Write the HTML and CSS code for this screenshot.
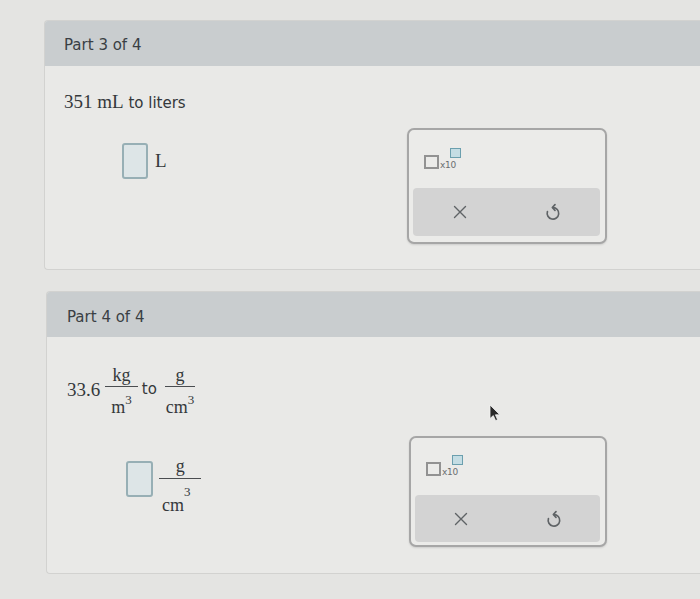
FILE: index.html
```html
<!DOCTYPE html>
<html>
<head>
<meta charset="utf-8">
<link rel="stylesheet" href="styles.css">
</head>
<body>
<div class="page">
  <section class="card card-p3">
    <div class="card-head">Part 3 of 4</div>
    <div class="card-body body-p3">
      <div class="work work-p3">
        <div class="question"><span class="serif">351 mL</span> to liters</div>
        <div class="answer answer-p3">
          <span class="input-box"></span>
          <span class="serif unit">L</span>
        </div>
      </div>
      <div class="tools tools-p3">
        <div class="tools-top">
          <span class="sci"><span class="sci-box"></span><span class="sci-x">x10</span><span class="sci-exp"></span></span>
        </div>
        <div class="tools-bar">
          <span class="tool-btn">
            <svg width="14" height="14" viewBox="0 0 14 14"><path d="M1.5 1.5 L12.5 12.5 M12.5 1.5 L1.5 12.5" stroke="#5f6366" stroke-width="1.4" fill="none" stroke-linecap="round"/></svg>
          </span>
          <span class="tool-btn">
            <svg width="18" height="20" viewBox="0 0 16 18"><path d="M8 5 A5.2 5.2 0 1 1 3 8.6" stroke="#5f6366" stroke-width="1.5" fill="none" stroke-linecap="round"/><path d="M9.8 2.4 L7.4 5 L9.8 7.6" stroke="#5f6366" stroke-width="1.5" fill="none" stroke-linecap="round" stroke-linejoin="round"/></svg>
          </span>
        </div>
      </div>
    </div>
  </section>

  <section class="card card-p4">
    <div class="card-head">Part 4 of 4</div>
    <div class="card-body body-p4">
      <div class="work work-p4">
        <div class="expr">
          <span class="num-main">33.6</span>
          <span class="frac frac-a">
            <span class="frac-num">kg</span>
            <span class="frac-bar"></span>
            <span class="frac-den"><span class="den-base">m</span><span class="den-exp">3</span></span>
          </span>
          <span class="word-to">to</span>
          <span class="frac frac-b">
            <span class="frac-num">g</span>
            <span class="frac-bar"></span>
            <span class="frac-den"><span class="den-base">cm</span><span class="den-exp">3</span></span>
          </span>
        </div>
        <div class="answer answer-p4">
          <span class="input-box input-box-p4"></span>
          <span class="frac frac-c">
            <span class="frac-num">g</span>
            <span class="frac-bar"></span>
            <span class="frac-den"><span class="den-base">cm</span><span class="den-exp">3</span></span>
          </span>
        </div>
      </div>
      <div class="tools tools-p4">
        <div class="tools-top">
          <span class="sci"><span class="sci-box"></span><span class="sci-x">x10</span><span class="sci-exp"></span></span>
        </div>
        <div class="tools-bar">
          <span class="tool-btn">
            <svg width="14" height="14" viewBox="0 0 14 14"><path d="M1.5 1.5 L12.5 12.5 M12.5 1.5 L1.5 12.5" stroke="#5f6366" stroke-width="1.4" fill="none" stroke-linecap="round"/></svg>
          </span>
          <span class="tool-btn">
            <svg width="18" height="20" viewBox="0 0 16 18"><path d="M8 5 A5.2 5.2 0 1 1 3 8.6" stroke="#5f6366" stroke-width="1.5" fill="none" stroke-linecap="round"/><path d="M9.8 2.4 L7.4 5 L9.8 7.6" stroke="#5f6366" stroke-width="1.5" fill="none" stroke-linecap="round" stroke-linejoin="round"/></svg>
          </span>
        </div>
      </div>
    </div>
  </section>

  <svg class="cursor" width="12" height="18" viewBox="0 0 12 18"><path d="M1 1 L1 14.5 L4.3 11.6 L6.6 16.6 L8.6 15.7 L6.4 10.8 L10.8 10.8 Z" fill="#2a2a2a" stroke="#f2f2f2" stroke-width="0.8"/></svg>
</div>
</body>
</html>
```

FILE: styles.css
```css
html, body {
  margin: 0;
  padding: 0;
}

body {
  background: #e4e4e2;
  overflow: hidden;
  font-family: "DejaVu Sans", Verdana, sans-serif;
  color: #34383b;
}

.page {
  position: relative;
  height: 599px;
  box-sizing: border-box;
  padding: 20px 0 0 44px;
}

.card {
  background: #e9e9e7;
  border: 1px solid #d2d2d0;
  border-right: none;
  border-radius: 4px 0 0 4px;
  overflow: hidden;
}

.card-p4 {
  margin-top: 21px;
  margin-left: 2px;
}

.card-head {
  height: 45px;
  box-sizing: border-box;
  background: #c9cdcf;
  display: flex;
  align-items: center;
  padding: 3px 0 0 19px;
  font-size: 15px;
  color: #3a3f44;
}

.card-p4 .card-head {
  padding-left: 20px;
  padding-top: 4px;
}

.card-body {
  display: flex;
  box-sizing: border-box;
}

.body-p3 {
  height: 203px;
  padding: 24px 0 0 19px;
}

.body-p4 {
  height: 236px;
  padding: 28px 0 0 20px;
}

.work-p3 {
  width: 343px;
}

.work-p4 {
  width: 342px;
}

.serif {
  font-family: "Liberation Serif", "Times New Roman", serif;
  font-size: 19px;
}

.question {
  font-size: 15px;
  line-height: 24px;
}

.answer {
  display: flex;
}

.answer-p3 {
  align-items: center;
  margin-top: 28px;
  padding-left: 58px;
}

.input-box {
  width: 26px;
  height: 36px;
  box-sizing: border-box;
  background: #dde5e7;
  border: 2px solid #97afb5;
  border-radius: 3px;
}

.unit {
  margin-left: 7px;
  line-height: 24px;
}

/* expression */
.expr {
  display: flex;
  align-items: flex-start;
}

.num-main {
  font-family: "Liberation Serif", "Times New Roman", serif;
  font-size: 19px;
  line-height: 20px;
  margin-top: 15px;
}

.frac {
  display: flex;
  flex-direction: column;
  font-family: "Liberation Serif", "Times New Roman", serif;
  font-size: 18px;
  color: #34383b;
}

.frac-num {
  line-height: 20px;
  text-align: center;
}

.frac-bar {
  height: 1px;
  background: #4a4d50;
  margin-top: 1px;
}

.frac-den {
  display: flex;
  justify-content: center;
  line-height: 20px;
}

.den-base {
  margin-top: 10px;
}

.den-exp {
  font-size: 13px;
  line-height: 13px;
  margin-top: 6px;
}

.frac-a {
  margin-left: 5px;
}

.frac-a .frac-den {
  padding: 0 6px;
}

.word-to {
  font-size: 15px;
  line-height: 18px;
  margin: 15px 0 0 4px;
}

.frac-b {
  margin-left: 8px;
}

.frac-b .frac-den {
  padding: 0 1px;
}

.answer-p4 {
  align-items: flex-start;
  margin-top: 39px;
  padding-left: 59px;
}

.input-box-p4 {
  width: 27px;
  margin-top: 5px;
}

.frac-c {
  margin-left: 6px;
}

.frac-c .frac-num {
  padding-left: 1px;
}

.frac-c .frac-bar {
  margin-top: 2px;
}

.frac-c .frac-den {
  justify-content: flex-start;
  padding: 0 10px 0 3px;
}

.frac-c .den-base {
  margin-top: 16px;
}

/* tool panel */
.tools {
  width: 200px;
  height: 116px;
  box-sizing: border-box;
  border: 2px solid #a6a6a6;
  border-radius: 7px;
  background: #ebebe9;
  box-shadow: 0 1px 2px rgba(0, 0, 0, 0.12);
  display: flex;
  flex-direction: column;
  padding: 0 5px 6px 4px;
}

.tools-p3 {
  margin-top: 38px;
}

.tools-p4 {
  width: 198px;
  height: 111px;
  margin-top: 71px;
  padding-bottom: 3px;
}

.tools-top {
  height: 58px;
  box-sizing: border-box;
  padding: 18px 0 0 11px;
}

.tools-p4 .tools-top {
  height: 57px;
  padding-top: 17px;
}

.sci {
  display: flex;
  align-items: flex-start;
  height: 22px;
}

.sci-box {
  width: 15px;
  height: 14px;
  box-sizing: border-box;
  border: 2px solid #929292;
  margin-top: 7px;
}

.sci-x {
  font-size: 9px;
  line-height: 10px;
  color: #6a6e71;
  margin: 12px 0 0 1px;
  letter-spacing: -0.3px;
}

.sci-exp {
  width: 11px;
  height: 10px;
  box-sizing: border-box;
  background: #c4dde4;
  border: 1.5px solid #6b9fae;
  margin-left: -6px;
}

.tools-bar {
  height: 48px;
  background: #d3d3d3;
  border-radius: 4px;
  display: flex;
}

.tools-p4 .tools-bar {
  height: 47px;
}

.tool-btn {
  flex: 1;
  display: flex;
  align-items: center;
  justify-content: center;
}

.cursor {
  position: absolute;
  left: 489px;
  top: 404px;
}
```
